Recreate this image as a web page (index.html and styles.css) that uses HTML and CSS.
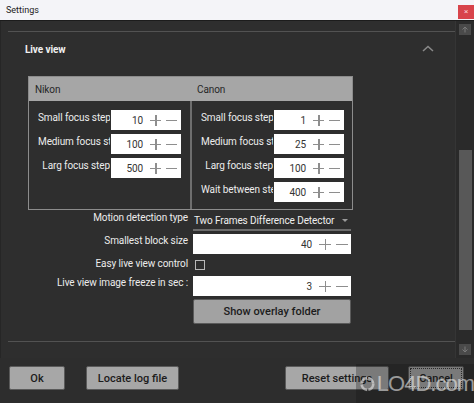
FILE: index.html
```html
<!DOCTYPE html>
<html>
<head>
<meta charset="utf-8">
<link rel="stylesheet" href="styles.css">
</head>
<body>
<div class="window">
  <div class="titlebar">
    <span class="title">Settings</span>
    <div class="close">×</div>
  </div>
  <div class="main">
    <div class="scroll">
      <div class="rule"></div>
      <div class="section-head">
        <span>Live view</span>
        <svg class="chev" width="12" height="7" viewBox="0 0 12 7"><path d="M1 6 L6 1.5 L11 6" fill="none" stroke="#8a8a8a" stroke-width="1.5"/></svg>
      </div>
      <div class="cams">
        <div class="cam-head">Nikon</div>
        <div class="cam-head canon">Canon</div>
        <div class="cam-body">
          <div class="crow"><span class="clabel">Small focus step</span><div class="num"><span class="val">10</span><span class="pm plus"></span><span class="pm minus"></span></div></div>
          <div class="crow"><span class="clabel">Medium focus step</span><div class="num"><span class="val">100</span><span class="pm plus"></span><span class="pm minus"></span></div></div>
          <div class="crow"><span class="clabel">Larg focus step</span><div class="num"><span class="val">500</span><span class="pm plus"></span><span class="pm minus"></span></div></div>
        </div>
        <div class="cam-body canon-body">
          <div class="crow"><span class="clabel">Small focus step</span><div class="num"><span class="val">1</span><span class="pm plus"></span><span class="pm minus"></span></div></div>
          <div class="crow"><span class="clabel">Medium focus step</span><div class="num"><span class="val">25</span><span class="pm plus"></span><span class="pm minus"></span></div></div>
          <div class="crow"><span class="clabel">Larg focus step</span><div class="num"><span class="val">100</span><span class="pm plus"></span><span class="pm minus"></span></div></div>
          <div class="crow"><span class="clabel">Wait between steps</span><div class="num"><span class="val">400</span><span class="pm plus"></span><span class="pm minus"></span></div></div>
        </div>
      </div>
      <div class="form">
        <span class="flabel">Motion detection type</span>
        <div class="combo"><span>Two Frames Difference Detector</span><span class="caret"></span></div>
        <span class="flabel">Smallest block size</span>
        <div class="num wide"><span class="val">40</span><span class="pm plus"></span><span class="pm minus"></span></div>
        <span class="flabel">Easy live view control</span>
        <div class="checkwrap"><span class="check"></span></div>
        <span class="flabel">Live view image freeze in sec :</span>
        <div class="num wide"><span class="val">3</span><span class="pm plus"></span><span class="pm minus"></span></div>
        <span></span>
        <div class="btn overlay">Show overlay folder</div>
      </div>
      <div class="rule low"></div>
    </div>
    <div class="vscroll">
      <div class="sb-btn"><svg width="12" height="11" viewBox="0 0 12 11"><path d="M6 8.5 V3 M3.5 5.5 L6 3 L8.5 5.5" fill="none" stroke="#7a7a7a" stroke-width="1"/></svg></div>
      <div class="track"><div class="thumb"></div></div>
      <div class="sb-btn"><svg width="12" height="11" viewBox="0 0 12 11"><path d="M6 2.5 V8 M3.5 5.5 L6 8 L8.5 5.5" fill="none" stroke="#7a7a7a" stroke-width="1"/></svg></div>
    </div>
  </div>
  <div class="footer">
    <div class="group">
      <div class="btn b-ok">Ok</div>
      <div class="btn b-log">Locate log file</div>
    </div>
    <div class="group">
      <div class="btn b-reset">Reset settings</div>
      <div class="btn b-cancel">Cancel</div>
    </div>
  </div>
  <div class="watermark">
    <svg width="28" height="28" viewBox="0 0 28 28"><circle cx="14" cy="14" r="11" fill="none" stroke="rgba(230,230,230,0.6)" stroke-width="5" stroke-dasharray="15 2.3"/></svg>
    <span>LO4D.com</span>
  </div>
</div>
</body>
</html>
```

FILE: styles.css
```css
* { box-sizing: border-box; }
html, body { margin: 0; padding: 0; }
body {
  font-family: Roboto, "Noto Sans", sans-serif;
  font-size: 10px;
  letter-spacing: -0.1px;
  background: #2d2d2d;
}
.window {
  position: relative;
  width: 474px;
  height: 403px;
  display: flex;
  flex-direction: column;
  background: #2d2d2d;
  overflow: hidden;
}
.titlebar {
  height: 21px;
  background: #f4f4f8;
  border-bottom: 1px solid #1c1c1c;
  display: flex;
  align-items: center;
  justify-content: space-between;
  padding-left: 6px;
}
.title { color: #222; font-size: 9px; letter-spacing: 0; margin-top: -1px; }
.close {
  width: 16px;
  height: 14px;
  background: #d8444b;
  color: #f8d0d0;
  font-size: 8px;
  line-height: 14px;
  text-align: center;
  align-self: flex-start;
  margin-top: 5px;
}
.main {
  height: 337px;
  display: flex;
}
.scroll {
  flex: 1;
  padding-left: 7px;
  overflow: hidden;
  background: #2e2e2e;
  border-left: 1px solid #262626;
}
.rule {
  margin-top: 10px;
  height: 1px;
  background: #525252;
}
.rule.low { margin-top: 17px; }
.section-head {
  height: 34px;
  display: flex;
  align-items: center;
  justify-content: space-between;
  padding-left: 17px;
  padding-right: 21px;
  color: #f0f0f0;
  font-weight: 700;
  font-size: 10px;
}
.chev { margin-top: -2px; }
.cams {
  margin-top: 10px;
  margin-left: 20px;
  width: 325px;
  display: grid;
  grid-template-columns: 161px 162px;
  border: 1px solid #8c8c8c;
}
.cam-head {
  height: 24px;
  background: #a6a6a6;
  color: #262626;
  display: flex;
  align-items: center;
  padding-left: 6px;
}
.cam-head.canon { padding-left: 7px; }
.cam-body {
  padding: 9px 0 7px 9px;
  display: flex;
  flex-direction: column;
  gap: 4px;
}
.canon-body { border-left: 2px solid #6e6e6e; }
.crow {
  display: flex;
  height: 20px;
  gap: 1px;
}
.clabel {
  width: 72px;
  overflow: hidden;
  white-space: nowrap;
  text-align: right;
  color: #ececec;
  line-height: 15px;
}
.num {
  width: 70px;
  height: 20px;
  background: #ffffff;
  display: flex;
  align-items: center;
  padding-right: 4px;
}
.num .val {
  flex: 1;
  text-align: right;
  color: #333;
  font-size: 10px;
  margin-right: 7px;
}
.pm {
  position: relative;
  width: 11px;
  height: 11px;
}
.pm + .pm { margin-left: 5px; }
.pm::before, .plus::after {
  content: "";
  position: absolute;
  left: 0;
  top: 5px;
  width: 11px;
  height: 1.5px;
  background: #8e8e8e;
}
.plus::after {
  left: 5px;
  top: 0;
  width: 1.5px;
  height: 11px;
}
.form {
  margin-top: 1px;
  display: grid;
  grid-template-columns: 180px 158px;
  grid-template-rows: 20px 20px 16px 20px 25px;
  column-gap: 5px;
  row-gap: 3px;
}
.flabel {
  text-align: right;
  color: #ececec;
  white-space: nowrap;
  line-height: 14px;
}
.combo {
  display: flex;
  align-items: center;
  justify-content: space-between;
  border-bottom: 2px solid #6c6c6c;
  padding-left: 1px;
  padding-right: 3px;
  color: #efefef;
  white-space: nowrap;
}
.caret {
  width: 0;
  height: 0;
  border-left: 3px solid transparent;
  border-right: 3px solid transparent;
  border-top: 3px solid #9a9a9a;
}
.num.wide { width: 158px; padding-right: 3px; }
.num.wide .pm { width: 12px; }
.num.wide .pm::before { width: 12px; }
.num.wide .plus::after { left: 5.5px; }
.checkwrap { display: flex; align-items: center; padding-left: 2px; }
.check {
  width: 10px;
  height: 10px;
  border: 1px solid #b8b8b8;
}
.btn {
  height: 24px;
  background: #a7a7a7;
  border: 1px solid #5a5a5a;
  border-radius: 2px;
  color: #1c1c1c;
  display: flex;
  align-items: center;
  justify-content: center;
  font-size: 11px;
  font-weight: 500;
  letter-spacing: 0;
}
.btn.overlay { height: 25px; background: #a2a2a2; }
.vscroll {
  width: 19px;
  background: #2a2a2a;
  border-left: 1px solid #353535;
  display: flex;
  flex-direction: column;
  align-items: center;
  padding: 3px 1px 3px 1px;
}
.sb-btn {
  width: 12px;
  height: 11px;
  background: #4a4a4a;
  display: flex;
}
.track {
  flex: 1;
  width: 100%;
  display: flex;
  justify-content: center;
  padding: 115px 0 14px;
}
.thumb { width: 13px; background: #585858; }
.footer {
  flex: 1;
  display: flex;
  justify-content: space-between;
  padding: 8px 10px 0 9px;
  background: #2d2d2d;
}
.group { display: flex; }
.b-ok { width: 56px; }
.b-log { width: 93px; margin-left: 21px; }
.b-reset { width: 104px; }
.b-cancel { width: 56px; margin-left: 19px; outline: 1px dotted #333; outline-offset: -3px; }
.watermark {
  position: absolute;
  left: 356px;
  top: 364px;
  width: 118px;
  height: 39px;
  background: rgba(20, 20, 20, 0.3);
  display: flex;
  align-items: center;
  gap: 2px;
  padding-left: 4px;
  color: rgba(235, 235, 235, 0.6);
  font-family: "Liberation Sans", sans-serif;
  font-size: 22px;
  letter-spacing: -1px;
}
```
